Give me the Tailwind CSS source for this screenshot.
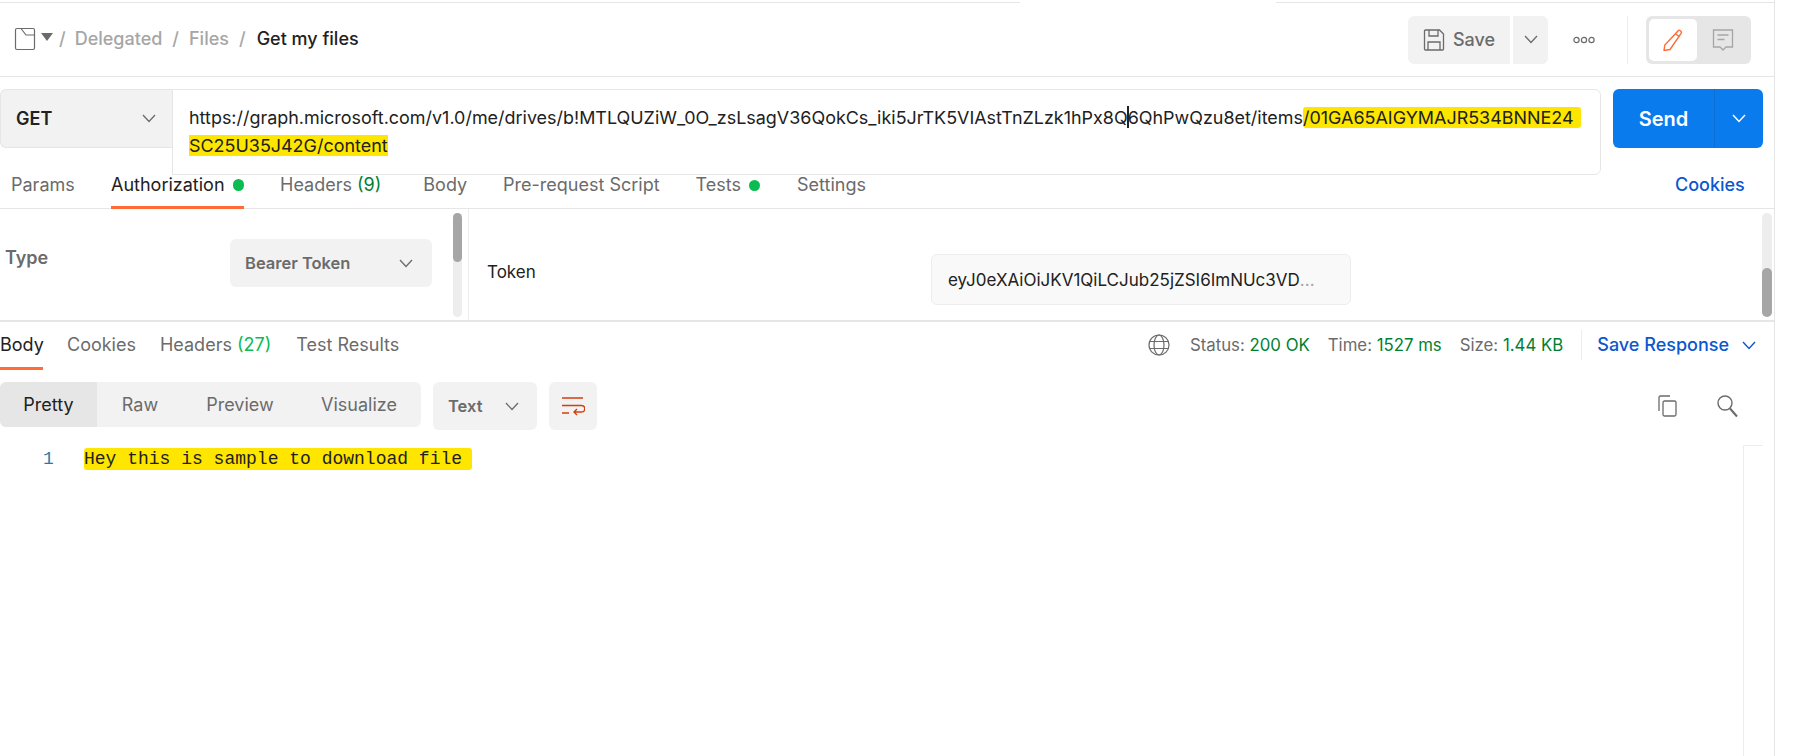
<!DOCTYPE html>
<html><head><meta charset="utf-8">
<script src="https://cdn.jsdelivr.net/npm/@tailwindcss/browser@4"></script>
</head>
<body class="bg-white">
<div class="w-[1775px] h-[756px] overflow-hidden border-r border-[#e6e6e6] font-['Inter','Liberation_Sans',sans-serif] text-[#212121] text-[18px] leading-[22px] relative">
  <!-- window top edge -->
  <div class="h-[3px] flex">
    <div class="w-[1020px] border-b border-[#e6e6e6] h-[3px]"></div>
    <div class="w-[256px]"></div>
    <div class="flex-1 border-b border-[#e6e6e6] h-[3px]"></div>
  </div>
  <!-- header -->
  <div class="h-[74px] border-b border-[#e6e6e6] flex items-center pr-[23px]">
    <div class="flex items-center pl-[14px] pb-[2px] font-medium">
      <svg class="w-[22px] h-[24px]" viewBox="0 0 22 24" fill="none" stroke="#6b6b6b" stroke-width="1.2"><path d="M3 1.500h16a1.500 1.500 0 0 1 1.500 1.500v18a1.500 1.500 0 0 1-1.500 1.500H3A1.500 1.500 0 0 1 1.500 21V3A1.500 1.500 0 0 1 3 1.500Z"/><path d="M7 1.500 L12 8 H20.500"/></svg>
      <svg class="w-[12px] h-[8px] ml-[5px] mr-[6px] mb-[3px]" viewBox="0 0 12 8"><path d="M0 0h12L6 8Z" fill="#6b6b6b"/></svg>
      <span class="text-[#a6a6a6]">/</span>
      <span class="text-[#a6a6a6] ml-[9px]">Delegated</span>
      <span class="text-[#a6a6a6] ml-[10px]">/</span>
      <span class="text-[#a6a6a6] ml-[10px]">Files</span>
      <span class="text-[#a6a6a6] ml-[10px]">/</span>
      <span class="text-[#212121] ml-[11px]">Get my files</span>
    </div>
    <div class="ml-auto flex items-center">
      <div class="w-[102px] h-[48px] bg-[#f2f2f2] rounded-l-[6px] flex items-center justify-center gap-[8px] text-[#6b6b6b] font-medium">
        <svg class="w-[22px] h-[24px]" viewBox="0 0 22 24" fill="none" stroke="#6b6b6b" stroke-width="1.3"><path d="M2.500 2h14l4 4v15a1 1 0 0 1-1 1h-17a1 1 0 0 1-1-1V3a1 1 0 0 1 1-1Z"/><path d="M6 2v6h9V2M5 22v-8h12v8"/></svg>
        Save
      </div>
      <div class="w-[35px] h-[48px] ml-[3px] bg-[#f2f2f2] rounded-r-[6px] flex items-center justify-center">
        <svg class="w-[14px] h-[9px]" viewBox="0 0 14 9" fill="none" stroke="#6b6b6b" stroke-width="1.3"><path d="M1 1l6 6.500L13 1"/></svg>
      </div>
      <svg class="w-[22px] h-[8px] ml-[25px]" viewBox="0 0 22 8" fill="none" stroke="#6b6b6b" stroke-width="1.2"><circle cx="3.500" cy="4" r="2.600"/><circle cx="11" cy="4" r="2.600"/><circle cx="18.500" cy="4" r="2.600"/></svg>
      <div class="w-px h-[48px] bg-[#ededed] ml-[32px]"></div>
      <div class="w-[105px] h-[48px] ml-[18px] bg-[#e6e6e6] rounded-[6px] p-[3px] flex items-center">
        <div class="w-[48px] h-[42px] bg-white rounded-[5px] flex items-center justify-center">
          <svg class="w-[22px] h-[22px]" viewBox="0 0 22 22" fill="none" stroke="#ff6c37" stroke-width="1.400"><path d="M15.500 2.500a2 2 0 0 1 3.600 1.800L8 20.500l-6 1 .8-5.500Z"/><path d="M13.500 5l4 2.700"/></svg>
        </div>
        <div class="flex-1 flex items-center justify-center">
          <svg class="w-[22px] h-[24px]" viewBox="0 0 22 24" fill="none" stroke="#a6a6a6" stroke-width="1.300"><path d="M1.500 2h19v17H14l-3 3-3-3H1.500Z"/><path d="M5.500 7h11M5.500 11.500h7"/></svg>
        </div>
      </div>
    </div>
  </div>
  <!-- url row -->
  <div class="flex items-start pt-[12px] h-[98px] relative z-10">
    <div class="w-[172px] h-[59px] bg-[#f2f2f2] border border-[#e6e6e6] border-r-0 rounded-l-[6px] flex items-center justify-between pl-[15px] pr-[16px] font-semibold">
      GET
      <svg class="w-[14px] h-[9px]" viewBox="0 0 14 9" fill="none" stroke="#6b6b6b" stroke-width="1.300"><path d="M1 1l6 6.500L13 1"/></svg>
    </div>
    <div class="w-[1429px] h-[86px] bg-white border border-[#e6e6e6] rounded-r-[6px] pl-[16px] pr-[16px] pt-[14px] leading-[28px] text-[17.960px] text-[#212121] relative">
      <div class="whitespace-nowrap">https://graph.microsoft.com/v1.0/me/drives/b!MTLQUZiW_0O_zsLsagV36QokCs_iki5JrTK5VIAstTnZLzk1hPx8Q<span class="inline-block w-[2px] h-[22px] bg-[#212121] align-[-4px] -mx-[1px]"></span>6QhPwQzu8et/items<span class="bg-[#ffe600] pr-[7px] rounded-[3px]">/01GA65AIGYMAJR534BNNE24</span></div>
      <div class="whitespace-nowrap"><span class="bg-[#ffe600]">SC25U35J42G/content</span></div>
    </div>
    <div class="w-[150px] h-[59px] ml-[12px] bg-[#097bed] rounded-[6px] flex text-white">
      <div class="w-[102px] flex items-center justify-center font-semibold text-[20px] border-r border-[#0a6fd6]">Send</div>
      <div class="flex-1 flex items-center justify-center">
        <svg class="w-[14px] h-[9px]" viewBox="0 0 14 9" fill="none" stroke="#fff" stroke-width="1.500"><path d="M1 1l6 6.500L13 1"/></svg>
      </div>
    </div>
  </div>
  <!-- request tabs -->
  <div class="h-[35px] -mt-[1px] border-b border-[#e6e6e6] flex items-start relative pl-[11px] text-[#6b6b6b]">
    <div class="w-[100px]">Params</div>
    <div class="h-[35px] w-[133px] border-b-[3px] border-[#ff6c37] text-[#212121] flex gap-[8px] whitespace-nowrap">Authorization<span class="w-[12px] h-[12px] mt-[5px] rounded-full bg-[#0cbb52]"></span></div>
    <div class="ml-[36px]">Headers <span class="text-[#007f31]">(9)</span></div>
    <div class="ml-[42px]">Body</div>
    <div class="ml-[36px]">Pre-request Script</div>
    <div class="ml-[36px] flex gap-[8px]">Tests<span class="w-[11px] h-[11px] mt-[6px] rounded-full bg-[#0cbb52]"></span></div>
    <div class="ml-[37px]">Settings</div>
    <div class="absolute left-[1675px] text-[#0b57d0] font-medium">Cookies</div>
  </div>
  <!-- auth pane -->
  <div class="h-[113px] border-b-2 border-[#e6e6e6] flex overflow-hidden">
    <div class="w-[469px] border-r border-[#ededed] flex relative">
      <div class="w-[230px] pl-[5px] pt-[38px] font-semibold text-[#6b6b6b]">Type</div>
      <div class="w-[202px] h-[48px] mt-[30px] bg-[#f2f2f2] rounded-[6px] flex items-center justify-between pl-[15px] pr-[19px] text-[#6b6b6b] font-semibold text-[16.500px]">
        Bearer Token
        <svg class="w-[14px] h-[9px]" viewBox="0 0 14 9" fill="none" stroke="#6b6b6b" stroke-width="1.300"><path d="M1 1l6 6.500L13 1"/></svg>
      </div>
      <div class="w-[9px] h-[104px] mt-[4px] ml-[21px] bg-[#ededed] rounded-full">
        <div class="h-[49px] bg-[#a6a6a6] rounded-full"></div>
      </div>
    </div>
    <div class="flex-1 flex relative">
      <div class="w-[462px] pl-[18px] pt-[52px] text-[17px]">Token</div>
      <div class="w-[420px] h-[51px] mt-[45px] bg-[#f9f9f9] border border-[#ededed] rounded-[6px] flex items-center pl-[16px] pr-[16px] text-[17px] whitespace-nowrap">
        eyJ0eXAiOiJKV1QiLCJub25jZSI6ImNUc3VD<span class="text-[#a6a6a6]">...</span>
      </div>
      <div class="w-[10px] h-[104px] mt-[4px] ml-[411px] bg-[#ededed] rounded-full flex items-end">
        <div class="w-full h-[49px] bg-[#a6a6a6] rounded-full"></div>
      </div>
    </div>
  </div>
  <!-- response tabs -->
  <div class="h-[48px] flex items-start relative text-[#6b6b6b]">
    <div class="h-[48px] w-[43px] border-b-[3px] border-[#ff6c37] pt-[12px] text-[#212121]">Body</div>
    <div class="pt-[12px] ml-[24px]">Cookies</div>
    <div class="pt-[12px] ml-[24px]">Headers <span class="text-[#0cbb52]">(27)</span></div>
    <div class="pt-[12px] ml-[25px]">Test Results</div>
    <div class="ml-auto mr-[18px] flex items-center h-[46px] text-[16.800px]">
      <svg class="w-[22px] h-[22px]" viewBox="0 0 22 22" fill="none" stroke="#6b6b6b" stroke-width="1.200"><circle cx="11" cy="11" r="10"/><ellipse cx="11" cy="11" rx="5" ry="10"/><path d="M1.500 7.500h19M1.500 14.500h19"/></svg>
      <span class="ml-[20px]">Status: <span class="text-[#007f31]">200 OK</span></span>
      <span class="ml-[18px]">Time: <span class="text-[#007f31]">1527 ms</span></span>
      <span class="ml-[18px]">Size: <span class="text-[#007f31]">1.44 KB</span></span>
      <div class="w-px h-[30px] bg-[#ededed] ml-[18px]"></div>
      <span class="ml-[15px] text-[#0b57d0] font-medium text-[18px]">Save Response</span>
      <svg class="w-[14px] h-[9px] ml-[13px]" viewBox="0 0 14 9" fill="none" stroke="#0b57d0" stroke-width="1.400"><path d="M1 1l6 6.500L13 1"/></svg>
    </div>
  </div>
  <!-- response toolbar -->
  <div class="h-[48px] mt-[12px] flex items-start pr-[36px]">
    <div class="w-[421px] h-[45px] bg-[#f2f2f2] rounded-[6px] flex text-[#6b6b6b] overflow-hidden">
      <div class="w-[97px] bg-[#e6e6e6] text-[#212121] flex items-center justify-center">Pretty</div>
      <div class="w-[86px] flex items-center justify-center">Raw</div>
      <div class="w-[114px] flex items-center justify-center">Preview</div>
      <div class="flex-1 flex items-center justify-center">Visualize</div>
    </div>
    <div class="w-[104px] h-[48px] ml-[12px] bg-[#f2f2f2] rounded-[6px] flex items-center justify-between pl-[15px] pr-[18px] font-semibold text-[#6b6b6b] text-[16.500px]">
      Text
      <svg class="w-[14px] h-[9px]" viewBox="0 0 14 9" fill="none" stroke="#6b6b6b" stroke-width="1.300"><path d="M1 1l6 6.500L13 1"/></svg>
    </div>
    <div class="w-[48px] h-[48px] ml-[12px] bg-[#f2f2f2] rounded-[6px] flex items-center justify-center">
      <svg class="w-[24px] h-[20px]" viewBox="0 0 24 20" fill="none" stroke="#d23f0e" stroke-width="1.400"><path d="M1 2h21M1 9.500h19.500a3 3 0 0 1 0 6.500h-7M16 13l-3 3 3 3M1 17h7"/></svg>
    </div>
    <svg class="w-[22px] h-[24px] ml-auto self-center" viewBox="0 0 22 24" fill="none" stroke="#6b6b6b" stroke-width="1.300"><rect x="7" y="7" width="13" height="15" rx="1.500"/><path d="M3 17V3.500A1.500 1.500 0 0 1 4.500 2H14"/></svg>
    <svg class="w-[22px] h-[24px] ml-[38px] self-center" viewBox="0 0 22 24" fill="none" stroke="#6b6b6b" stroke-width="1.400"><circle cx="9" cy="9" r="7"/><path d="M14 14.500l7 8" stroke-width="2"/></svg>
  </div>
  <!-- code -->
  <div class="flex pt-[19px] relative font-['Liberation_Mono','DejaVu_Sans_Mono',monospace] text-[18px] leading-[20px]">
    <div class="w-[84px] pl-[43px] text-[#1f7fa8]">1</div>
    <div><span class="bg-[#ffe600] pr-[10px] py-[1px] rounded-[3px]">Hey this is sample to download file</span></div>
    <div class="absolute left-[1743px] top-[15px] w-[20px] h-[400px] border-l border-t border-[#ededed]"></div>
  </div>
</div>
</body></html>
